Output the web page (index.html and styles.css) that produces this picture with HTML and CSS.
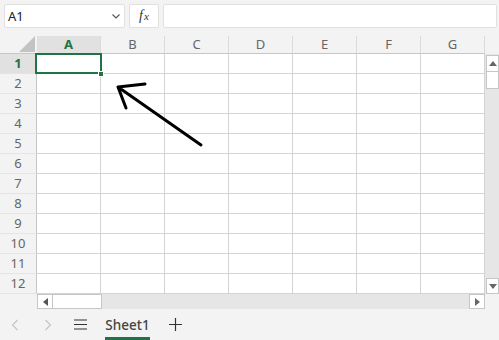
FILE: index.html
```html
<!DOCTYPE html>
<html>
<head>
<meta charset="utf-8">
<link rel="stylesheet" href="styles.css">
</head>
<body>
<div class="app">
  <div class="topbar">
    <div class="namebox"><span class="nb-text">A1</span>
      <svg class="chev" width="8" height="5" viewBox="0 0 8 5"><path d="M0.5 0.5 L4 4 L7.5 0.5" fill="none" stroke="#555" stroke-width="1.1"/></svg>
    </div>
    <div class="fxbox"><span class="fx">f<span class="fxx">x</span></span></div>
    <div class="formula"></div>
  </div>

  <div class="sheet">
    <div class="corner"><svg width="16" height="16" viewBox="0 0 16 16"><path d="M16 0 L16 16 L0 16 Z" fill="#c3c3c3"/></svg></div>
    <div class="ch sel">A</div><div class="ch">B</div><div class="ch">C</div><div class="ch">D</div><div class="ch">E</div><div class="ch">F</div><div class="ch">G</div>
    <div class="ch-end"></div>

    <div class="rh sel">1</div><div class="cell a1"><div class="selbox"></div><div class="handle"></div></div><div class="cell"></div><div class="cell"></div><div class="cell"></div><div class="cell"></div><div class="cell"></div><div class="cell"></div>
    <div class="vscroll">
      <div class="sbtn up"><svg width="8" height="5" viewBox="0 0 8 5"><path d="M0 5 L4 0 L8 5Z" fill="#666"/></svg></div>
      <div class="vthumb"></div>
      <div class="vtrack"></div>
      <div class="sbtn down"><svg width="8" height="5" viewBox="0 0 8 5"><path d="M0 0 L4 5 L8 0Z" fill="#666"/></svg></div>
    </div>
    <div class="rh">2</div><div class="cell"></div><div class="cell"></div><div class="cell"></div><div class="cell"></div><div class="cell"></div><div class="cell"></div><div class="cell"></div>
    <div class="rh">3</div><div class="cell"></div><div class="cell"></div><div class="cell"></div><div class="cell"></div><div class="cell"></div><div class="cell"></div><div class="cell"></div>
    <div class="rh">4</div><div class="cell"></div><div class="cell"></div><div class="cell"></div><div class="cell"></div><div class="cell"></div><div class="cell"></div><div class="cell"></div>
    <div class="rh">5</div><div class="cell"></div><div class="cell"></div><div class="cell"></div><div class="cell"></div><div class="cell"></div><div class="cell"></div><div class="cell"></div>
    <div class="rh">6</div><div class="cell"></div><div class="cell"></div><div class="cell"></div><div class="cell"></div><div class="cell"></div><div class="cell"></div><div class="cell"></div>
    <div class="rh">7</div><div class="cell"></div><div class="cell"></div><div class="cell"></div><div class="cell"></div><div class="cell"></div><div class="cell"></div><div class="cell"></div>
    <div class="rh">8</div><div class="cell"></div><div class="cell"></div><div class="cell"></div><div class="cell"></div><div class="cell"></div><div class="cell"></div><div class="cell"></div>
    <div class="rh">9</div><div class="cell"></div><div class="cell"></div><div class="cell"></div><div class="cell"></div><div class="cell"></div><div class="cell"></div><div class="cell"></div>
    <div class="rh">10</div><div class="cell"></div><div class="cell"></div><div class="cell"></div><div class="cell"></div><div class="cell"></div><div class="cell"></div><div class="cell"></div>
    <div class="rh">11</div><div class="cell"></div><div class="cell"></div><div class="cell"></div><div class="cell"></div><div class="cell"></div><div class="cell"></div><div class="cell"></div>
    <div class="rh">12</div><div class="cell"></div><div class="cell"></div><div class="cell"></div><div class="cell"></div><div class="cell"></div><div class="cell"></div><div class="cell"></div>
  </div>

  <div class="hscrollrow">
    <div class="hs-left"></div>
    <div class="hscroll">
      <div class="sbtn hbtn"><svg width="5" height="8" viewBox="0 0 5 8"><path d="M5 0 L0 4 L5 8Z" fill="#555"/></svg></div>
      <div class="hthumb"></div>
      <div class="htrack"></div>
      <div class="sbtn hbtn"><svg width="5" height="8" viewBox="0 0 5 8"><path d="M0 0 L5 4 L0 8Z" fill="#666"/></svg></div>
    </div>
    <div class="hs-right"></div>
  </div>

  <div class="tabbar">
    <span class="nav prev"><svg width="8" height="12" viewBox="0 0 8 12"><path d="M6.5 1 L1.5 6 L6.5 11" fill="none" stroke="#c4c4c4" stroke-width="1.1"/></svg></span>
    <span class="nav next"><svg width="8" height="12" viewBox="0 0 8 12"><path d="M1.5 1 L6.5 6 L1.5 11" fill="none" stroke="#c4c4c4" stroke-width="1.1"/></svg></span>
    <span class="nav menu"><svg width="13" height="11" viewBox="0 0 13 11"><path d="M0 1 H13 M0 5.5 H13 M0 10 H13" stroke="#333" stroke-width="1.1"/></svg></span>
    <span class="tab">Sheet1</span>
    <span class="nav plus"><svg width="13" height="13" viewBox="0 0 13 13"><path d="M6.5 0 V13 M0 6.5 H13" stroke="#333" stroke-width="1.2"/></svg></span>
  </div>

  <svg class="arrow" width="499" height="340" viewBox="0 0 499 340">
    <path d="M201 145 L118 87 M118 87 L145 84 M118 87 L126 108" fill="none" stroke="#000" stroke-width="3" stroke-linecap="round" stroke-linejoin="round"/>
  </svg>
</div>
</body>
</html>
```

FILE: styles.css
```css
* { box-sizing: border-box; }
html, body { margin: 0; padding: 0; }
body {
  width: 499px;
  height: 340px;
  overflow: hidden;
  background: #f3f3f3;
  font-family: "Noto Sans", "Open Sans", sans-serif;
}
.app {
  position: relative;
  width: 499px;
  height: 340px;
  display: flex;
  flex-direction: column;
}
.topbar {
  height: 36px;
  display: flex;
  gap: 4px;
  padding: 4px 2px 0 4px;
  flex: none;
}
.namebox, .fxbox, .formula {
  height: 24px;
  background: #fff;
  border: 1px solid #e1e1e1;
  border-radius: 2px;
}
.namebox {
  width: 121px;
  display: flex;
  align-items: center;
  justify-content: space-between;
  padding: 0 4px 0 3px;
}
.nb-text { font-size: 13px; color: #222; }
.chev { margin-top: 1px; }
.fxbox {
  width: 30px;
  display: flex;
  align-items: center;
  justify-content: center;
}
.fx {
  font-family: "Liberation Serif", serif;
  font-style: italic;
  font-size: 14px;
  color: #333;
}
.fxx { font-size: 11px; margin-left: 1px; }
.formula { flex: 1; }

.sheet {
  flex: none;
  display: grid;
  grid-template-columns: 37px repeat(7, 64px) 14px;
  grid-template-rows: 18px repeat(12, 20px);
  background: #fff;
}
.corner {
  background: #f3f3f3;
  border-bottom: 1px solid #c6c6c6;
  display: flex;
  align-items: flex-end;
  justify-content: flex-end;
  padding: 0 2px 1px 0;
}
.ch {
  background: #f3f3f3;
  border-right: 1px solid #dadada;
  border-bottom: 1px solid #c6c6c6;
  font-size: 13px;
  color: #666;
  display: flex;
  align-items: center;
  justify-content: center;
  line-height: 1;
}
.ch-end { background: #f3f3f3; }
.ch.sel {
  background: #e1e1e1;
  color: #217346;
  font-weight: 700;
  border-bottom: 1px solid #217346;
}
.rh {
  background: #f3f3f3;
  border-bottom: 1px solid #e4e4e4;
  border-right: 1px solid #c6c6c6;
  font-size: 13px;
  color: #666;
  display: flex;
  align-items: center;
  justify-content: center;
  line-height: 1;
}
.rh.sel {
  background: #e1e1e1;
  color: #217346;
  font-weight: 700;
  border-right: 1px solid #217346;
}
.cell {
  border-right: 1px solid #d4d4d4;
  border-bottom: 1px solid #d4d4d4;
  background: #fff;
}
.a1 { position: relative; }
.selbox {
  position: absolute;
  top: -1px;
  left: -2px;
  right: -2px;
  bottom: -1px;
  border: 2px solid #217346;
  z-index: 2;
}
.handle {
  position: absolute;
  right: -4px;
  bottom: -4px;
  width: 6px;
  height: 6px;
  background: #217346;
  border: 1px solid #fff;
  z-index: 3;
}
.vscroll {
  grid-column: 9;
  grid-row: 2 / span 12;
  background: #e6e6e6;
  display: flex;
  flex-direction: column;
  padding-left: 1px;
}
.sbtn {
  background: #fff;
  border: 1px solid #c6c6c6;
  display: flex;
  align-items: center;
  justify-content: center;
  flex: none;
}
.up { height: 17px; margin-top: 1px; }
.down { height: 16px; }
.vthumb {
  height: 17px;
  background: #fff;
  border: 1px solid #c6c6c6;
  border-top: none;
}
.vtrack { flex: 1; }

.hscrollrow {
  height: 15px;
  flex: none;
  display: flex;
}
.hs-left { width: 37px; background: #f3f3f3; }
.hscroll {
  width: 448px;
  background: #e6e6e6;
  display: flex;
}
.hbtn { width: 16px; height: 15px; }
.hthumb {
  width: 49px;
  background: #fff;
  border: 1px solid #c6c6c6;
  border-left: none;
}
.htrack { flex: 1; }
.hs-right { flex: 1; background: #f3f3f3; }

.tabbar {
  flex: 1;
  display: flex;
  align-items: center;
}
.nav {
  display: flex;
  align-items: center;
  justify-content: center;
  height: 31px;
  flex: none;
}
.prev { width: 30px; }
.next { width: 36px; }
.menu { width: 28px; }
.tab {
  margin-left: 11px;
  width: 45px;
  height: 31px;
  display: flex;
  align-items: center;
  justify-content: center;
  font-size: 13.5px;
  font-weight: 500;
  color: #444;
  border-bottom: 3px solid #217346;
  padding-top: 3px;
  flex: none;
}
.plus { width: 13px; margin-left: 19px; }
.arrow {
  position: absolute;
  left: 0;
  top: 0;
  pointer-events: none;
}
```
